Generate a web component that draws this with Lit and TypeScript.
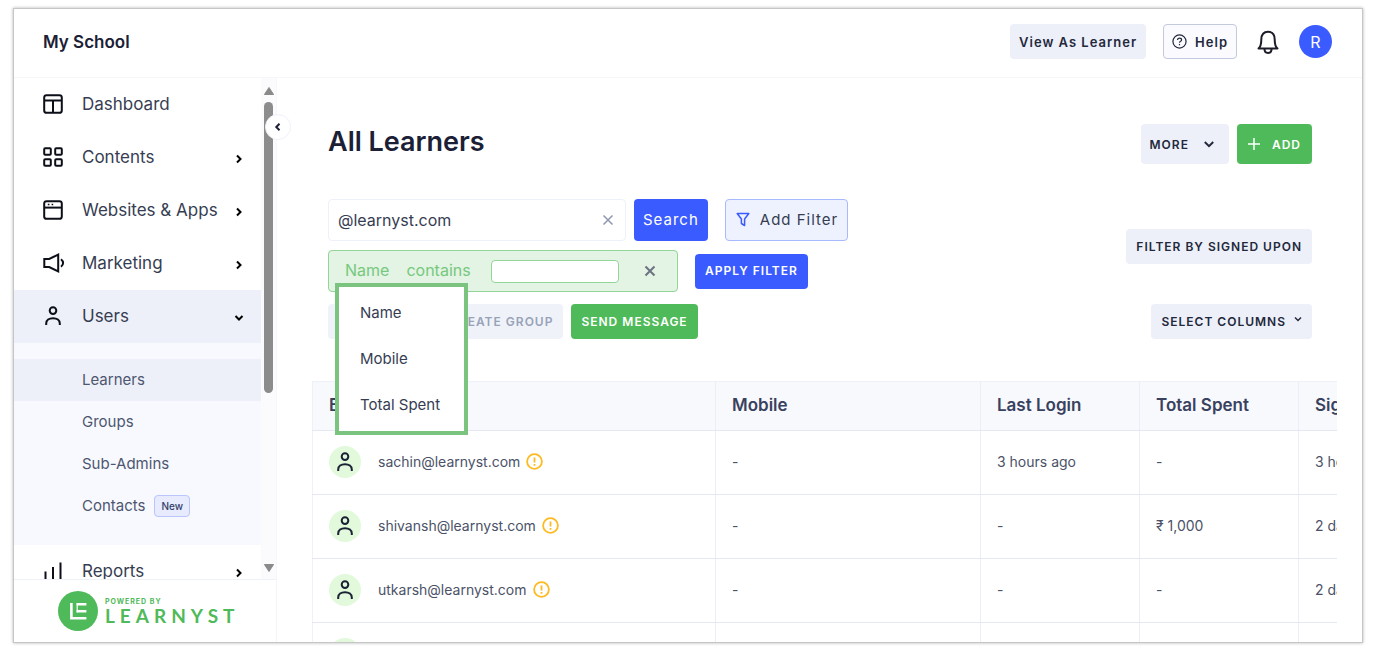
import { LitElement, html, css, svg, nothing } from "lit";
import { customElement, state } from "lit/decorators.js";
import { classMap } from "lit/directives/class-map.js";

const icons: Record<string, unknown> = {
  dashboard: svg`<rect x="1.2" y="1.2" width="17.6" height="17.6" rx="2.4"/><path d="M1.2 6.5H18.8M10 6.5V18.8"/>`,
  contents: svg`<rect x="1.2" y="1.2" width="6.6" height="6.6" rx="1"/><rect x="12.2" y="1.2" width="6.6" height="6.6" rx="1"/><rect x="1.2" y="12.2" width="6.6" height="6.6" rx="1"/><rect x="12.2" y="12.2" width="6.6" height="6.6" rx="1"/>`,
  websites: svg`<rect x="1.2" y="1.2" width="17.6" height="17.6" rx="2.4"/><path d="M1.2 7.6H18.8"/><path d="M4.8 4.6h1.6M8.6 4.6h1.6" stroke-width="1.5"/>`,
  marketing: svg`<path d="M1.3 6H6.2L15.2 1.6V18.4L6.2 14H1.3Z"/><path d="M18 6.2C20.8 8.4 20.8 11.6 18 13.8"/>`,
  users: svg`<circle cx="10" cy="4.6" r="3.3"/><path d="M3.2 19V17.5C3.2 14.2 6 12.2 10 12.2S16.8 14.2 16.8 17.5V19"/>`,
  reports: svg`<path d="M2.5 10.5V20M10 6V20M17.5 1.5V20"/>`,
};

const icon = (name: string) =>
  html`<svg class="icon" viewBox="0 0 20 20" aria-hidden="true">${icons[name]}</svg>`;

const cross = html`<svg class="cross" viewBox="0 0 12 12" aria-hidden="true"><path d="M1.5 1.5L10.5 10.5M10.5 1.5L1.5 10.5"/></svg>`;

const person = html`<svg class="person" viewBox="0 0 20 20" aria-hidden="true">${icons.users}</svg>`;

const nav = [
  { id: "dashboard", label: "Dashboard", more: false },
  { id: "contents", label: "Contents", more: true },
  { id: "websites", label: "Websites & Apps", more: true },
  { id: "marketing", label: "Marketing", more: true },
  { id: "users", label: "Users", more: true, open: true },
  { id: "reports", label: "Reports", more: true },
];

const userPages = [
  { label: "Learners", current: true },
  { label: "Groups" },
  { label: "Sub-Admins" },
  { label: "Contacts", tag: "New" },
];

const learners = [
  { email: "sachin@learnyst.com", mobile: "-", login: "3 hours ago", spent: "-", signed: "3 hours ago" },
  { email: "shivansh@learnyst.com", mobile: "-", login: "-", spent: "₹ 1,000", signed: "2 days ago" },
  { email: "utkarsh@learnyst.com", mobile: "-", login: "-", spent: "-", signed: "2 days ago" },
  { email: "rahul@learnyst.com", mobile: "-", login: "-", spent: "-", signed: "2 days ago" },
];

@customElement("app-sidebar")
export class AppSidebar extends LitElement {
  static styles = css`
    :host { display: flex; flex-direction: column; position: relative; width: 263px; flex: none; min-height: 0; box-sizing: border-box; }
    * { box-sizing: border-box; }
    .body { flex: 1; min-height: 0; display: flex; }
    .nav { flex: 1; min-width: 0; overflow: hidden; }
    ul { list-style: none; margin: 0; padding: 0; }
    .item { display: flex; align-items: center; height: 53px; padding: 0 18px 2px 29px; color: #363d52; font-size: 17px; text-decoration: none; }
    .item.open { background: #edf0f8; }
    .icon { width: 20px; height: 20px; margin-right: 19px; fill: none; stroke: #0d0f18; stroke-width: 2; overflow: visible; }
    .label { flex: 1; white-space: nowrap; }
    .arrow { width: 8px; height: 8px; margin-top: 4px; fill: none; stroke: #000; stroke-width: 2; overflow: visible; }
    .item.open .arrow { transform: rotate(90deg); }
    .sub { background: #f8f9fe; padding: 16px 0 18px; }
    .page { display: flex; align-items: center; gap: 9px; height: 42px; padding: 0 0 2px 68px; color: #4d5670; font-size: 15px; text-decoration: none; }
    .page.current { background: #edf0f8; }
    .tag { border: 1px solid #b9c5fb; border-radius: 4px; background: #e7ebfd; color: #33406a; font-size: 10px; font-weight: 500; line-height: 20px; padding: 0 6px; margin-top: 2px; }
    .rail { width: 16px; flex: none; background: #fbfbfd; border-right: 1px solid #f6f7fb; display: flex; flex-direction: column; align-items: center; padding: 9px 0 7px; gap: 7px; }
    .rail svg { width: 10px; height: 8px; flex: none; fill: #8a8a8a; }
    .track { flex: 1; width: 9px; }
    .thumb { height: 64%; border-radius: 5px; background: #8c8c8c; }
    .collapse { position: absolute; right: -14px; top: 36px; width: 26px; height: 26px; border: 1px solid #f0f2fa; border-radius: 50%; background: #fff; padding: 0; display: grid; place-items: center; }
    .collapse svg { width: 8px; height: 8px; fill: none; stroke: #1b2036; stroke-width: 2; }
    .brand { height: 63px; flex: none; border-top: 1px solid #eff1f9; border-right: 1px solid #f3f5fb; display: flex; align-items: center; gap: 7px; padding-left: 44px; color: #4fba59; }
    .mark { width: 40px; height: 40px; }
    .words { display: flex; flex-direction: column; font-weight: 700; }
    .by { font-size: 7px; line-height: 9px; letter-spacing: 1px; }
    .name { font-family: Lato, "Liberation Sans", sans-serif; font-size: 19px; line-height: 19px; letter-spacing: 5px; }
  `;

  render() {
    return html`
      <div class="body">
        <nav class="nav" aria-label="Main">
          <ul>
            ${nav.map(
              (n) => html`<li>
                <a class=${classMap({ item: true, open: !!n.open })} href="#${n.id}">
                  ${icon(n.id)}<span class="label">${n.label}</span>
                  ${n.more ? html`<svg class="arrow" viewBox="0 0 8 8" aria-hidden="true"><path d="M2 0.5L5.5 4L2 7.5"/></svg>` : nothing}
                </a>
                ${n.open
                  ? html`<ul class="sub">
                      ${userPages.map(
                        (p) => html`<li><a class=${classMap({ page: true, current: !!p.current })} href="#${p.label.toLowerCase()}">${p.label}${p.tag ? html`<span class="tag">${p.tag}</span>` : nothing}</a></li>`
                      )}
                    </ul>`
                  : nothing}
              </li>`
            )}
          </ul>
        </nav>
        <div class="rail" aria-hidden="true">
          <svg viewBox="0 0 10 8"><path d="M5 0.5L9.6 7.5H0.4Z" stroke="#8a8a8a" stroke-linejoin="round"/></svg>
          <div class="track"><div class="thumb"></div></div>
          <svg viewBox="0 0 10 8"><path d="M5 7.5L9.6 0.5H0.4Z" stroke="#8a8a8a" stroke-linejoin="round"/></svg>
        </div>
      </div>
      <button class="collapse" aria-label="Collapse sidebar"><svg viewBox="0 0 8 8"><path d="M5.5 0.8L2.3 4L5.5 7.2"/></svg></button>
      <div class="brand">
        <svg class="mark" viewBox="0 0 40 40" aria-hidden="true">
          <circle cx="20" cy="20" r="20" fill="#4fba59"/>
          <path d="M13.4 12V27.2H28.4M18.6 13.2H28.4M18.6 20.2H28.4" fill="none" stroke="#fff" stroke-width="2.6"/>
          <path d="M19.2 12V21.4" fill="none" stroke="#fff" stroke-width="1.2"/>
        </svg>
        <div class="words"><span class="by">POWERED BY</span><span class="name">LEARNYST</span></div>
      </div>
    `;
  }
}

@customElement("app-root")
export class AppRoot extends LitElement {
  static styles = css`
    :host { display: block; height: 100vh; padding: 8px 13px; box-sizing: border-box; background: #fff; font-family: Inter, "Noto Sans", sans-serif; color: #1b2036; }
    * { box-sizing: border-box; }
    button, input { font: inherit; color: inherit; }
    button { cursor: pointer; white-space: nowrap; }
    .window { height: 100%; display: flex; flex-direction: column; border: 1px solid #c6c6c6; box-shadow: 0 0 3px rgba(0, 0, 0, 0.3); overflow: hidden; }
    .top { height: 69px; flex: none; display: flex; align-items: center; gap: 17px; padding: 0 30px 3px 29px; border-bottom: 1px solid #f5f6fa; }
    .school { flex: 1; font-size: 17px; font-weight: 600; }
    .btn { display: inline-flex; align-items: center; justify-content: center; height: 35px; padding: 0 9px 1px; border: 1px solid transparent; border-radius: 4px; background: #edf0f8; color: #23283c; font-size: 12px; font-weight: 600; letter-spacing: 1px; }
    .btn.large { font-size: 13px; padding: 0 8px; }
    .btn.outline { background: #fbfbff; border-color: #c3cade; gap: 8px; }
    .btn.blue { background: #3a5bff; color: #fff; }
    .btn.green { background: #4fba59; color: #fff; }
    .btn.tall { height: 40px; }
    .btn:disabled { background: #f0f2f9; color: #97a2b8; }
    .btn svg { fill: none; stroke: currentColor; flex: none; }
    .help svg { width: 15px; height: 15px; stroke-width: 1.3; }
    .bell { border: 0; background: none; padding: 0; margin: 0 3px; width: 22px; height: 26px; }
    .bell svg { width: 22px; height: 26px; fill: none; stroke: #1d1c28; stroke-width: 2; }
    .avatar { width: 33px; height: 33px; border: 0; border-radius: 50%; background: #3a5bff; color: #fff; font-size: 16px; padding: 0; }
    .main { flex: 1; min-height: 0; display: flex; }
    .content { flex: 1; min-width: 0; overflow: hidden; padding-top: 46px; }
    .head, .tools { display: flex; justify-content: space-between; padding: 0 50px 0 51px; }
    .head { align-items: flex-start; }
    h1 { margin: 0; font-size: 27px; line-height: 35px; font-weight: 600; }
    .pair { display: flex; gap: 8px; }
    .more { gap: 14px; padding: 0 13px 0 8px; }
    .more svg { width: 12px; height: 12px; stroke-width: 2; }
    .add { gap: 12px; padding: 0 10px; }
    .add svg { width: 12px; height: 12px; stroke-width: 1.5; }
    .tools { margin-top: 35px; }
    .left { display: flex; flex-direction: column; align-items: flex-start; }
    .row { display: flex; align-items: center; }
    .search { display: flex; align-items: center; width: 298px; height: 42px; border: 1px solid #eff1fa; border-radius: 4px; padding: 0 11px 0 9px; margin-right: 8px; }
    .search input { flex: 1; min-width: 0; border: 0; outline: 0; padding: 0; font-size: 16px; color: #363d52; background: none; }
    .icon-btn { border: 0; background: none; padding: 0; display: grid; place-items: center; }
    .cross { width: 12px; height: 12px; fill: none; stroke: #8d98b0; stroke-width: 1.5; }
    .go { height: 42px; font-size: 15px; font-weight: 400; padding: 0 8px 2px; margin-right: 17px; }
    .add-filter { height: 42px; gap: 10px; background: #eef2ff; border-color: #a9b9fd; color: #363d52; font-size: 15px; font-weight: 400; padding: 0 9px 2px 10px; }
    .add-filter svg { width: 14px; height: 15px; stroke: #3a5bff; stroke-width: 1.5; }
    .chips { margin-top: 9px; gap: 17px; }
    .chip { position: relative; display: flex; align-items: center; height: 42px; width: 350px; border: 1px solid #92d597; border-radius: 4px; background: #e3f3e4; padding: 0 21px 0 16px; color: #76c97c; font-size: 16px; }
    .field { border: 0; background: none; padding: 0 0 2px; margin-right: 17px; }
    .value { width: 128px; height: 23px; border: 1px solid #92d597; border-radius: 4px; background: #fff; margin: 0 auto 0 3px; padding: 0 6px; font-size: 14px; }
    .chip .cross { stroke: #6b7280; stroke-width: 2; }
    .menu { position: absolute; z-index: 2; top: 32px; left: 6px; width: 133px; border: 4px solid #7bc47f; background: #fff; margin: 0; padding: 2px 0 4px; list-style: none; }
    .option { display: block; width: 100%; height: 46px; border: 0; background: none; padding: 0 0 0 21px; text-align: left; font-size: 15px; color: #363d52; }
    .actions { margin-top: 12px; gap: 8px; }
    .first { min-width: 103px; }
    .right { display: flex; flex-direction: column; justify-content: space-between; align-items: flex-end; padding-top: 30px; }
    .columns { gap: 8px; }
    .columns svg { width: 8px; height: 8px; stroke-width: 1.5; margin-bottom: 4px; }
    .scroll { margin: 42px 25px 0 35px; overflow: hidden; }
    table { table-layout: fixed; width: 1184px; min-width: 100%; border-collapse: collapse; border-left: 1px solid #eef1f9; }
    .c1 { width: 403px; } .c2 { width: 265px; } .c3, .c4 { width: 159px; }
    th, td { text-align: left; padding: 0 16px 2px; border-right: 1px solid #eaeef8; border-bottom: 1px solid #e3e8f4; font-size: 14px; white-space: nowrap; }
    th { height: 49px; background: #f8f9fd; border-top: 1px solid #eef1f9; font-size: 17px; font-weight: 600; color: #38425f; }
    td { height: 64px; color: #4b5268; }
    .who { display: flex; align-items: center; }
    .pic { display: grid; place-items: center; width: 32px; height: 32px; margin-right: 17px; border-radius: 50%; background: #e2f9dc; }
    .person { width: 20px; height: 20px; fill: none; stroke: #1c2236; stroke-width: 2; overflow: visible; }
    .warn { width: 17px; height: 17px; margin-left: 6px; fill: none; stroke: #fdba21; stroke-width: 1.8; }
  `;

  @state() private query = "@learnyst.com";
  @state() private menuOpen = true;

  render() {
    return html`
      <div class="window">
        <header class="top">
          <div class="school">My School</div>
          <button class="btn large">View As Learner</button>
          <button class="btn large outline help"><svg viewBox="0 0 16 16" aria-hidden="true"><circle cx="8" cy="8" r="7"/><path d="M5.9 6.5C5.9 5.2 6.8 4.4 8 4.4S10.2 5.2 10.2 6.3C10.2 7.8 8 7.7 8 9.3"/><path d="M8 10.6V12"/></svg>Help</button>
          <button class="bell" aria-label="Notifications"><svg viewBox="0 0 22 26"><path d="M1.5 19.5C4 17.5 4.3 15 4.3 10.5C4.3 5.5 6.8 2.8 11 2.8S17.7 5.5 17.7 10.5C17.7 15 18 17.5 20.5 19.5Z" stroke-linejoin="round"/><path d="M7.5 20C7.5 25.2 14.5 25.2 14.5 20"/></svg></button>
          <button class="avatar" aria-label="Account">R</button>
        </header>
        <div class="main">
          <app-sidebar></app-sidebar>
          <main class="content">
            <div class="head">
              <h1>All Learners</h1>
              <div class="pair">
                <button class="btn tall more">MORE<svg viewBox="0 0 12 12" aria-hidden="true"><path d="M1.8 4L6 8.2L10.2 4"/></svg></button>
                <button class="btn tall green add"><svg viewBox="0 0 12 12" aria-hidden="true"><path d="M6 0V12M0 6H12"/></svg>ADD</button>
              </div>
            </div>
            <div class="tools">
              <div class="left">
                <div class="row">
                  <div class="search">
                    <input type="text" aria-label="Search learners" .value=${this.query} @input=${(e: Event) => (this.query = (e.target as HTMLInputElement).value)} />
                    <button class="icon-btn" aria-label="Clear search" @click=${() => (this.query = "")}>${cross}</button>
                  </div>
                  <button class="btn blue go">Search</button>
                  <button class="btn add-filter"><svg viewBox="0 0 14 15" aria-hidden="true"><path d="M1.2 1.5H12.8L8.6 7V13.5L5.4 11.5V7Z" stroke-linejoin="round"/></svg>Add Filter</button>
                </div>
                <div class="row chips">
                  <div class="chip">
                    <button class="field" aria-haspopup="true" @click=${() => (this.menuOpen = !this.menuOpen)}>Name</button>
                    <button class="field">contains</button>
                    <input class="value" type="text" aria-label="Filter value" />
                    <button class="icon-btn" aria-label="Remove filter">${cross}</button>
                    ${this.menuOpen
                      ? html`<ul class="menu">${["Name", "Mobile", "Total Spent"].map((o) => html`<li><button class="option">${o}</button></li>`)}</ul>`
                      : nothing}
                  </div>
                  <button class="btn blue">APPLY FILTER</button>
                </div>
                <div class="row actions">
                  <button class="btn first" disabled>EXPORT</button>
                  <button class="btn" disabled>CREATE GROUP</button>
                  <button class="btn green">SEND MESSAGE</button>
                </div>
              </div>
              <div class="right">
                <button class="btn">FILTER BY SIGNED UPON</button>
                <button class="btn columns">SELECT COLUMNS<svg viewBox="0 0 8 8" aria-hidden="true"><path d="M1 2.5L4 5.5L7 2.5"/></svg></button>
              </div>
            </div>
            <div class="scroll">
              <table>
                <colgroup><col class="c1" /><col class="c2" /><col class="c3" /><col class="c4" /><col /></colgroup>
                <thead><tr><th>Email</th><th>Mobile</th><th>Last Login</th><th>Total Spent</th><th>Signed Up</th></tr></thead>
                <tbody>
                  ${learners.map(
                    (l) => html`<tr>
                      <td><div class="who"><span class="pic">${person}</span>${l.email}<svg class="warn" viewBox="0 0 17 17" aria-hidden="true"><circle cx="8.5" cy="8.5" r="7.4"/><path d="M8.5 4.5V9.5M8.5 11V12.8"/></svg></div></td>
                      <td>${l.mobile}</td><td>${l.login}</td><td>${l.spent}</td><td>${l.signed}</td>
                    </tr>`
                  )}
                </tbody>
              </table>
            </div>
          </main>
        </div>
      </div>
    `;
  }
}
